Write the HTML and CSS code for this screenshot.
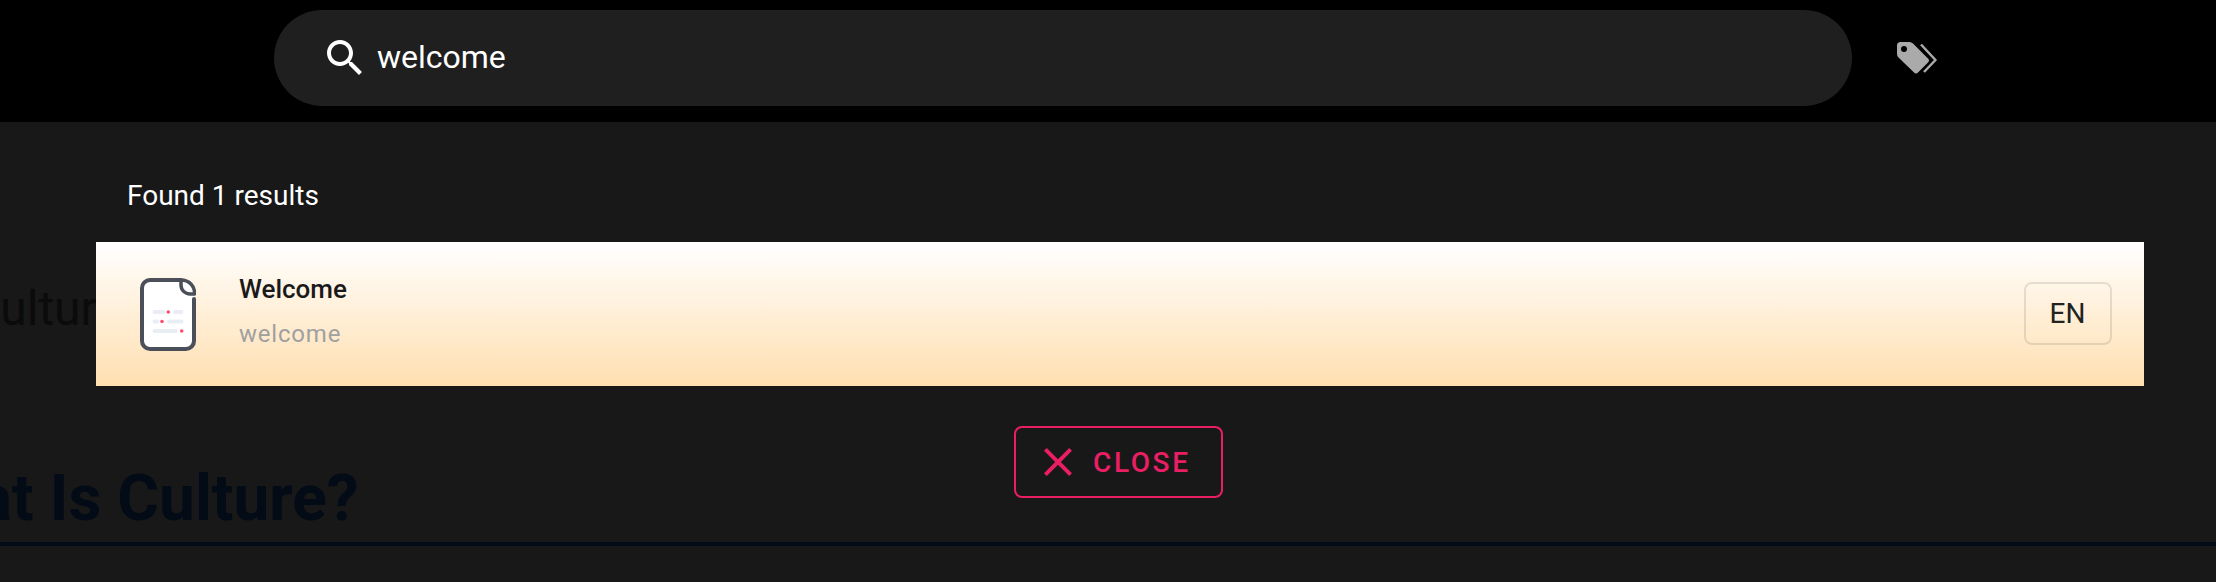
FILE: index.html
```html
<!DOCTYPE html>
<html lang="en">
<head>
  <meta charset="UTF-8" />
  <meta name="viewport" content="width=device-width, initial-scale=1.0" />
  <title>Search</title>
  <link rel="stylesheet" href="styles.css">
</head>
<body>
  <header class="topbar">
    <div class="search-box">
      <svg class="search-icon" viewBox="0 0 24 24"><path d="M15.5 14h-.79l-.28-.27C15.41 12.59 16 11.11 16 9.5 16 5.91 13.09 3 9.5 3S3 5.91 3 9.5 5.91 16 9.5 16c1.61 0 3.09-.59 4.23-1.57l.27.28v.79l5 4.99L20.49 19l-4.99-5zm-6 0C7.01 14 5 11.99 5 9.5S7.01 5 9.5 5 14 7.01 14 9.5 11.99 14 9.5 14z"/></svg>
      <span class="search-text">welcome</span>
    </div>
    <svg class="tags-icon" viewBox="0 0 40 32">
      <path d="M3.5 0H12.5Q14.5 0 16 1.5L31 16.5Q33 18.5 31 20.5L21 30.5Q19 32.500 17 30.500L1.500 15.500Q0 14 0 12V3.500Q0 0 3.500 0Z"/>
      <circle class="tag-hole" cx="7" cy="7" r="3"/>
      <path class="tag-edge" d="M24 2.500L38.500 18L27 30"/>
    </svg>
  </header>

  <main class="page">
    <p class="page-intro">Culture</p>
    <h2 class="page-title">What Is Culture?</h2>
  </main>

  <section class="results">
    <p class="results-count">Found 1 results</p>
    <div class="result-card">
      <svg class="doc-icon" viewBox="0 0 56 73">
        <path class="doc-sheet" d="M10 2H42L54 16V63a8 8 0 0 1-8 8H10a8 8 0 0 1-8-8V10a8 8 0 0 1 8-8Z"/>
        <path class="doc-line" d="M14.500 34H23M35 34H41.500M14.500 43.500H17M29 43.500H41.500M14.500 53H36"/>
        <circle class="doc-dot" cx="28.300" cy="34" r="1.800"/>
        <circle class="doc-dot" cx="22" cy="43.500" r="1.800"/>
        <circle class="doc-dot" cx="41.700" cy="53" r="1.800"/>
        <path class="doc-edge" d="M54 21V63a8 8 0 0 1-8 8H10a8 8 0 0 1-8-8V10a8 8 0 0 1 8-8H41"/>
        <path class="doc-fold" d="M41 2C49 2 55 8 54.500 16H50C45 16 41 12 41 7Z"/>
      </svg>
      <div class="result-info">
        <div class="result-title">Welcome</div>
        <div class="result-path">welcome</div>
      </div>
      <span class="lang-chip">EN</span>
    </div>
    <button class="close-btn" type="button">
      <svg class="close-icon" viewBox="0 0 24 24"><path d="M19 6.410L17.590 5 12 10.590 6.410 5 5 6.410 10.590 12 5 17.590 6.410 19 12 13.410 17.590 19 19 17.590 13.410 12z"/></svg>
      <span>CLOSE</span>
    </button>
  </section>
</body>
</html>
```

FILE: styles.css
```css
* {
  box-sizing: border-box;
}
html, body {
  height: 100%;
}
body {
  margin: 0;
  position: relative;
  overflow: hidden;
  background-color: #181818;
  font-family: Roboto, sans-serif;
}
.topbar {
  height: 122px;
  padding: 10px 0 16px 274px;
  background-color: #000;
  display: flex;
  align-items: center;
  gap: 45px;
}
.search-box {
  width: 1578px;
  height: 96px;
  padding-left: 47px;
  border-radius: 48px;
  background-color: #1f1f1f;
  display: flex;
  align-items: center;
  gap: 8px;
}
.search-icon {
  width: 48px;
  height: 48px;
  fill: #fff;
}
.search-text {
  color: #fff;
  font-size: 32px;
  line-height: 34px;
  margin-top: -2px;
}
.tags-icon {
  width: 40px;
  height: 32px;
  fill: #aaa;
}
.tag-hole {
  fill: #000;
}
.tag-edge {
  fill: none;
  stroke: #aaa;
  stroke-width: 2.500;
  stroke-linejoin: round;
}
.page {
  padding-top: 159px;
}
.page-intro {
  margin: 0 0 0 -31px;
  color: #0b0b0b;
  font-size: 48px;
  line-height: 56px;
}
.page-title {
  margin: 124px 0 0;
  padding: 0 0 6px;
  border-bottom: 4px solid #020b16;
  color: #020b16;
  font-size: 64px;
  line-height: 75px;
  font-weight: 700;
  text-indent: -114px;
}
.results {
  position: absolute;
  top: 122px;
  left: 0;
  right: 0;
  padding: 0 72px 0 96px;
  display: flex;
  flex-direction: column;
  align-items: center;
}
.results-count {
  align-self: flex-start;
  margin: 56px 0 0 31px;
  color: #fff;
  font-size: 28px;
  line-height: 36px;
}
.result-card {
  align-self: stretch;
  height: 144px;
  margin-top: 28px;
  padding: 0 32px 0 44px;
  background: linear-gradient(to bottom, #fff, #ffdfb0);
  display: flex;
  align-items: center;
}
.doc-icon {
  width: 56px;
  height: 73px;
}
.doc-sheet {
  fill: #fff;
}
.doc-line {
  fill: none;
  stroke: #e9eef5;
  stroke-width: 4;
  stroke-linecap: round;
}
.doc-dot {
  fill: #ff4d6d;
}
.doc-edge {
  fill: none;
  stroke: #4a4f5a;
  stroke-width: 4;
  stroke-linecap: round;
}
.doc-fold {
  fill: #fff;
  stroke: #4a4f5a;
  stroke-width: 3.500;
  stroke-linejoin: round;
}
.result-info {
  flex: 1;
  margin-left: 43px;
  margin-top: -6px;
}
.result-title {
  color: #1a1a1a;
  font-size: 26px;
  font-weight: 500;
  line-height: 32px;
}
.result-path {
  margin-top: 14px;
  color: #a0a0a0;
  font-size: 24px;
  letter-spacing: 0.8px;
  line-height: 30px;
}
.lang-chip {
  width: 88px;
  height: 63px;
  margin-top: -1px;
  border: 2px solid rgba(0, 0, 0, 0.1);
  border-radius: 8px;
  color: #222;
  font-size: 28px;
  font-weight: 400;
  padding-right: 1px;
  display: flex;
  align-items: center;
  justify-content: center;
}
.close-btn {
  width: 209px;
  height: 72px;
  margin-top: 40px;
  margin-left: -3px;
  padding: 0 0 0 18px;
  background: transparent;
  border: 2px solid #e91e63;
  border-radius: 8px;
  color: #e91e63;
  font-family: Roboto, sans-serif;
  font-size: 28px;
  font-weight: 500;
  letter-spacing: 2.600px;
  display: flex;
  align-items: center;
  gap: 11px;
}
.close-icon {
  width: 48px;
  height: 48px;
  fill: #e91e63;
}
```
